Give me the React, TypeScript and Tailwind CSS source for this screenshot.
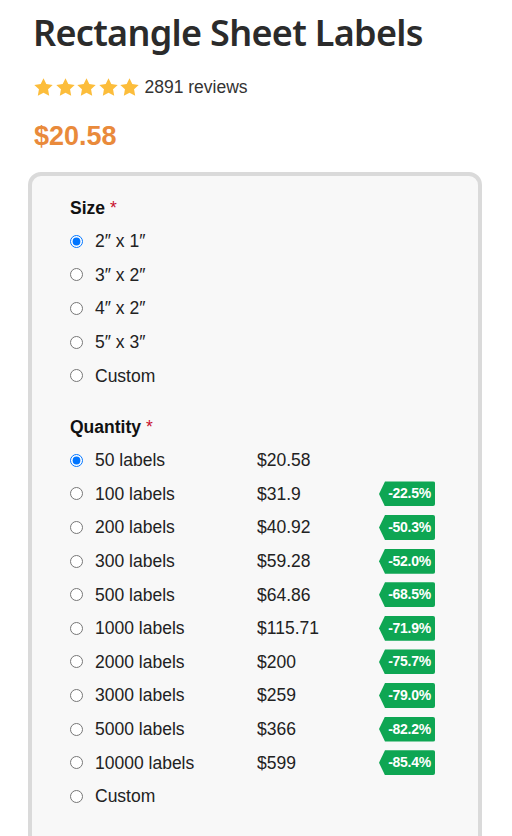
import React from "react";

const sizes = ["2″ x 1″", "3″ x 2″", "4″ x 2″", "5″ x 3″", "Custom"];
const qty: { l: string; p?: string; d?: string }[] = [
  { l: "50 labels", p: "$20.58" },
  { l: "100 labels", p: "$31.9", d: "-22.5%" },
  { l: "200 labels", p: "$40.92", d: "-50.3%" },
  { l: "300 labels", p: "$59.28", d: "-52.0%" },
  { l: "500 labels", p: "$64.86", d: "-68.5%" },
  { l: "1000 labels", p: "$115.71", d: "-71.9%" },
  { l: "2000 labels", p: "$200", d: "-75.7%" },
  { l: "3000 labels", p: "$259", d: "-79.0%" },
  { l: "5000 labels", p: "$366", d: "-82.2%" },
  { l: "10000 labels", p: "$599", d: "-85.4%" },
  { l: "Custom" },
];

function Star() {
  return (
    <svg width="21" height="21" viewBox="0 0 24 24" className="shrink-0">
      <path
        d="M12 1.5l3.2 6.6 7.3 1-5.3 5 1.3 7.2L12 17.9l-6.5 3.4 1.3-7.2-5.3-5 7.3-1z"
        fill="#fcbd3b"
      />
    </svg>
  );
}

function Radio({ checked }: { checked?: boolean }) {
  return (
    <input
      type="radio"
      readOnly
      checked={!!checked}
      className="m-0 w-[13px] h-[13px] shrink-0 accent-[#0075ff]"
    />
  );
}

export default function App() {
  return (
    <div
      className="min-h-screen bg-white pl-[28px] text-[#333]"
      style={{ fontFamily: "'Liberation Sans', Arial, sans-serif" }}
    >
      <h1
        className="pl-[5px] pt-[11px] text-[36px] leading-[44px] font-semibold text-[#2b2b2b] tracking-[-0.7px]"
        style={{ fontFamily: "'Noto Sans', sans-serif" }}
      >
        Rectangle Sheet Labels
      </h1>
      <div className="mt-[21px] pl-[5px] flex items-center h-[22px] gap-[0.5px]">
        <Star />
        <Star />
        <Star />
        <Star />
        <Star />
        <span className="ml-[4px] text-[17.5px] text-[#333]">2891 reviews</span>
      </div>
      <div className="mt-[22px] pl-[6px] h-[32px] flex items-center text-[27px] font-bold text-[#e98a3b]">
        $20.58
      </div>
      <div className="mt-[20px] w-[454px] border-[4px] border-[#dadada] rounded-[13px] bg-[#f8f8f8] pl-[38px] pt-[15px] pb-[40px] text-[17.5px] text-[#222]">
        <div className="h-[33.6px] flex items-center font-bold text-[#111]">
          Size<span className="ml-[5px] text-[#c8102e] font-normal">*</span>
        </div>
        {sizes.map((s, i) => (
          <div key={s} className="h-[33.6px] flex items-center">
            <Radio checked={i === 0} />
            <span className="ml-[12px]">{s}</span>
          </div>
        ))}
        <div className="mt-[17.4px] h-[33.6px] flex items-center font-bold text-[#111]">
          Quantity<span className="ml-[5px] text-[#c8102e] font-normal">*</span>
        </div>
        {qty.map((q, i) => (
          <div key={q.l + i} className="h-[33.6px] flex items-center">
            <div className="w-[187px] flex items-center">
              <Radio checked={i === 0} />
              <span className="ml-[12px]">{q.l}</span>
            </div>
            <div className="w-[122px]">{q.p}</div>
            {q.d && (
              <div className="w-[56px] h-[25px] bg-[#0ea653] rounded-r-[2px] [clip-path:polygon(6px_0,100%_0,100%_100%,6px_100%,0_50%)] flex items-center justify-center pl-[5px] text-[14px] tracking-[-0.3px] font-bold text-white">
                {q.d}
              </div>
            )}
          </div>
        ))}
      </div>
    </div>
  );
}
